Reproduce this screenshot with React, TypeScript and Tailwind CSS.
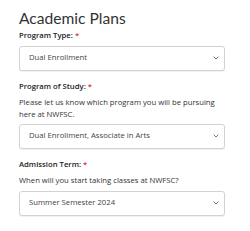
import React from "react";

function Chevron() {
  return (
    <svg width="6" height="4" viewBox="0 0 6 4" className="shrink-0">
      <path d="M0.7 0.7 L3 3 L5.3 0.7" fill="none" stroke="#666" strokeWidth="0.9" />
    </svg>
  );
}

function Select({ value }: { value: string }) {
  return (
    <div className="flex h-[25px] w-[206px] items-center justify-between rounded-[3px] border border-[#d2d2d2] bg-white pl-[9px] pr-[5px] shadow-[0_1px_1px_rgba(0,0,0,0.06)]">
      <span className="text-[7.7px] text-[#444]">{value}</span>
      <Chevron />
    </div>
  );
}

function Label({ text }: { text: string }) {
  return (
    <div className="text-[7.7px] font-semibold leading-[12px] text-[#222]">
      {text} <span className="text-[#d9342b]">*</span>
    </div>
  );
}

export default function App() {
  return (
    <div
      className="h-[231px] w-[250px] bg-white pl-[19px] pt-[9px]"
      style={{ fontFamily: '"Open Sans", sans-serif' }}
    >
      <div
        className="text-[15.6px] leading-[18px] text-[#333]"
        style={{ fontFamily: 'Lato, sans-serif' }}
      >
        Academic Plans
      </div>
      <div className="mt-[2px]">
        <Label text="Program Type:" />
      </div>
      <div className="mt-[4.5px]">
        <Select value="Dual Enrollment" />
      </div>
      <div className="mt-[9.5px]">
        <Label text="Program of Study:" />
      </div>
      <div className="mt-[4px] w-[206px] text-[7.7px] leading-[12px] text-[#333]">
        Please let us know which program you will be pursuing here at NWFSC.
      </div>
      <div className="mt-[3.5px]">
        <Select value="Dual Enrollment, Associate in Arts" />
      </div>
      <div className="mt-[9.5px]">
        <Label text="Admission Term:" />
      </div>
      <div className="mt-[4px] text-[7.7px] leading-[12px] text-[#333]">
        When will you start taking classes at NWFSC?
      </div>
      <div className="mt-[4.5px]">
        <Select value="Summer Semester 2024" />
      </div>
    </div>
  );
}
